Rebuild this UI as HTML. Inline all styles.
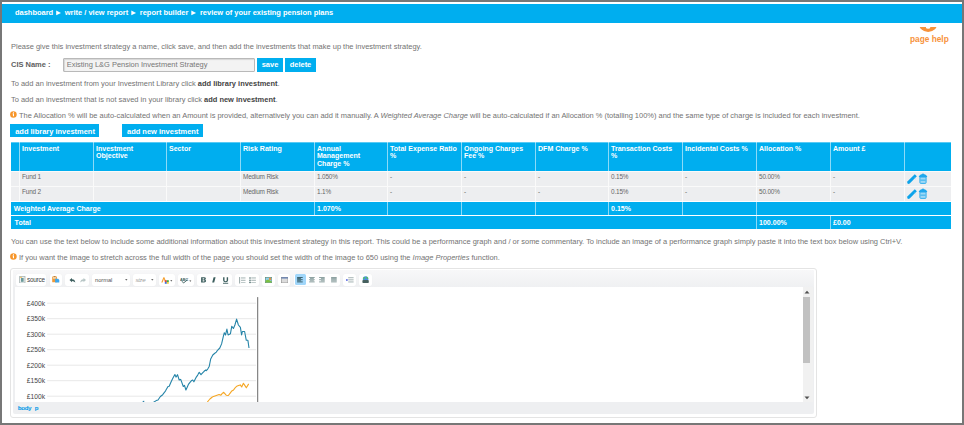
<!DOCTYPE html>
<html><head><meta charset="utf-8"><style>
html,body{margin:0;padding:0}
body{width:964px;height:425px;position:relative;overflow:hidden;background:#fff;font-family:"Liberation Sans",sans-serif;color:#737373}
.a{position:absolute;white-space:nowrap;line-height:1}
.frame{position:absolute;left:0;top:0;width:960px;height:421px;border:2px solid #777;border-top-width:2px}
.hdr{position:absolute;left:2px;top:4px;width:960px;height:18.6px;background:#00AEEF}
.btn{position:absolute;background:#00AEEF;color:#fff;font-weight:bold;line-height:1;white-space:nowrap}
.b{color:#444;font-weight:bold}
</style></head><body>
<div class="frame"></div>
<div class="hdr"></div>
<div class="a" style="left:15px;top:9.37px;font-size:7.48px;font-weight:bold;color:#fff">dashboard <span style="display:inline-block;width:7.40625px"></span> write / view report <span style="display:inline-block;width:7.40625px"></span> report builder <span style="display:inline-block;width:7.40625px"></span> review of your existing pension plans</div>
<svg style="position:absolute;left:0;top:0" width="300" height="24"><polygon points="56.2,10.5 61.0,12.9 56.2,15.3" fill="#fff"/><polygon points="131.3,10.5 136.10000000000002,12.9 131.3,15.3" fill="#fff"/><polygon points="191.3,10.5 196.10000000000002,12.9 191.3,15.3" fill="#fff"/></svg>
<svg style="position:absolute;left:912px;top:26.9px" width="32" height="6"><clipPath id="hc"><rect x="0" y="0" width="32" height="6"/></clipPath><g clip-path="url(#hc)"><circle cx="16.1" cy="-4.35" r="9.45" fill="#F7923A"/><path d="M14 -1 H18.2 V0.6 Q18.2 1.8 16.1 1.8 Q14 1.8 14 0.6 Z" fill="#fff"/></g></svg>
<div class="a" style="left:910px;top:35.17px;font-size:8.3px;font-weight:bold;color:#F7923A">page help</div>
<div class="a" style="left:11px;top:43.27px;font-size:7.48px">Please give this investment strategy a name, click save, and then add the investments that make up the investment strategy.</div>
<div class="a b" style="left:11px;top:61.17px;font-size:7.48px;color:#606060">CIS Name :</div>
<div style="position:absolute;left:63px;top:58px;width:189.8px;height:11.6px;border:1px solid #b9b9b9;border-radius:1px;background:#f3f3f3;box-shadow:inset 1px 1px 1px rgba(0,0,0,.12)"></div>
<div class="a" style="left:66.7px;top:60.97px;font-size:7.48px;color:#777">Existing L&amp;G Pension Investment Strategy</div>
<div class="btn" style="left:257px;top:58px;width:26px;height:13.7px;font-size:7.48px"><span style="position:absolute;left:4.7px;top:3.27px">save</span></div>
<div class="btn" style="left:285px;top:58px;width:31px;height:13.6px;font-size:7.48px"><span style="position:absolute;left:4.7px;top:3.27px">delete</span></div>
<div class="a" style="left:11px;top:80.37px;font-size:7.48px">To add an investment from your Investment Library click <span class="b">add library investment</span>.</div>
<div class="a" style="left:11px;top:96.17px;font-size:7.48px">To add an investment that is not saved in your library click <span class="b">add new investment</span>.</div>
<svg style="position:absolute;left:9px;top:110.1px" width="9" height="9"><circle cx="4.4" cy="4.5" r="3.3" fill="#F7962A"/><rect x="4" y="2.3" width="1" height="1" fill="#fff"/><path d="M3.5 3.6 H5 V6.3 H3.9 V4.3 H3.5 Z" fill="#fff"/></svg>
<div class="a" style="left:19px;top:111.57px;font-size:7.48px">The Allocation % will be auto-calculated when an Amount is provided, alternatively you can add it manually. A <i>Weighted Average Charge</i> will be auto-calculated if an Allocation % (totalling 100%) and the same type of charge is included for each investment.</div>
<div class="btn" style="left:10.2px;top:124.2px;width:89.1px;height:12.8px;font-size:7.48px"><span style="position:absolute;left:5px;top:3.87px">add library investment</span></div>
<div class="btn" style="left:122px;top:124.2px;width:80.9px;height:12.8px;font-size:7.48px"><span style="position:absolute;left:5px;top:3.87px">add new investment</span></div>
<div style="position:absolute;left:11px;top:142px;width:940px;height:29px;background:#00AEEF"></div>
<div style="position:absolute;left:11px;top:142px;width:940px;height:1px;background:rgba(255,255,255,0.35)"></div>
<div style="position:absolute;left:19px;top:142px;width:1px;height:29px;background:rgba(255,255,255,0.55)"></div>
<div style="position:absolute;left:93px;top:142px;width:1px;height:29px;background:rgba(255,255,255,0.55)"></div>
<div style="position:absolute;left:166px;top:142px;width:1px;height:29px;background:rgba(255,255,255,0.55)"></div>
<div style="position:absolute;left:240px;top:142px;width:1px;height:29px;background:rgba(255,255,255,0.55)"></div>
<div style="position:absolute;left:314px;top:142px;width:1px;height:29px;background:rgba(255,255,255,0.55)"></div>
<div style="position:absolute;left:387px;top:142px;width:1px;height:29px;background:rgba(255,255,255,0.55)"></div>
<div style="position:absolute;left:461px;top:142px;width:1px;height:29px;background:rgba(255,255,255,0.55)"></div>
<div style="position:absolute;left:535px;top:142px;width:1px;height:29px;background:rgba(255,255,255,0.55)"></div>
<div style="position:absolute;left:608px;top:142px;width:1px;height:29px;background:rgba(255,255,255,0.55)"></div>
<div style="position:absolute;left:682px;top:142px;width:1px;height:29px;background:rgba(255,255,255,0.55)"></div>
<div style="position:absolute;left:756px;top:142px;width:1px;height:29px;background:rgba(255,255,255,0.55)"></div>
<div style="position:absolute;left:830px;top:142px;width:1px;height:29px;background:rgba(255,255,255,0.55)"></div>
<div style="position:absolute;left:904px;top:142px;width:1px;height:29px;background:rgba(255,255,255,0.55)"></div>
<div style="position:absolute;left:22px;top:144.76px;font-size:7.05px;line-height:7.6px;font-weight:bold;color:#fff;white-space:nowrap">Investment</div>
<div style="position:absolute;left:96px;top:144.76px;font-size:7.05px;line-height:7.6px;font-weight:bold;color:#fff;white-space:nowrap">Investment<br>Objective</div>
<div style="position:absolute;left:169px;top:144.76px;font-size:7.05px;line-height:7.6px;font-weight:bold;color:#fff;white-space:nowrap">Sector</div>
<div style="position:absolute;left:243px;top:144.76px;font-size:7.05px;line-height:7.6px;font-weight:bold;color:#fff;white-space:nowrap">Risk Rating</div>
<div style="position:absolute;left:317px;top:144.76px;font-size:7.05px;line-height:7.6px;font-weight:bold;color:#fff;white-space:nowrap">Annual<br>Management<br>Charge %</div>
<div style="position:absolute;left:390px;top:144.76px;font-size:7.05px;line-height:7.6px;font-weight:bold;color:#fff;white-space:nowrap">Total Expense Ratio<br>%</div>
<div style="position:absolute;left:464px;top:144.76px;font-size:7.05px;line-height:7.6px;font-weight:bold;color:#fff;white-space:nowrap">Ongoing Charges<br>Fee %</div>
<div style="position:absolute;left:538px;top:144.76px;font-size:7.05px;line-height:7.6px;font-weight:bold;color:#fff;white-space:nowrap">DFM Charge %</div>
<div style="position:absolute;left:611px;top:144.76px;font-size:7.05px;line-height:7.6px;font-weight:bold;color:#fff;white-space:nowrap">Transaction Costs<br>%</div>
<div style="position:absolute;left:685px;top:144.76px;font-size:7.05px;line-height:7.6px;font-weight:bold;color:#fff;white-space:nowrap">Incidental Costs %</div>
<div style="position:absolute;left:759px;top:144.76px;font-size:7.05px;line-height:7.6px;font-weight:bold;color:#fff;white-space:nowrap">Allocation %</div>
<div style="position:absolute;left:833px;top:144.76px;font-size:7.05px;line-height:7.6px;font-weight:bold;color:#fff;white-space:nowrap">Amount &pound;</div>
<div style="position:absolute;left:11px;top:171px;width:940px;height:15px;background:#EDEEF0"></div>
<div style="position:absolute;left:11px;top:171px;width:940px;height:1px;background:#fafafa"></div>
<div style="position:absolute;left:19px;top:171px;width:1px;height:15px;background:#fafafa"></div>
<div style="position:absolute;left:93px;top:171px;width:1px;height:15px;background:#fafafa"></div>
<div style="position:absolute;left:166px;top:171px;width:1px;height:15px;background:#fafafa"></div>
<div style="position:absolute;left:240px;top:171px;width:1px;height:15px;background:#fafafa"></div>
<div style="position:absolute;left:314px;top:171px;width:1px;height:15px;background:#fafafa"></div>
<div style="position:absolute;left:387px;top:171px;width:1px;height:15px;background:#fafafa"></div>
<div style="position:absolute;left:461px;top:171px;width:1px;height:15px;background:#fafafa"></div>
<div style="position:absolute;left:535px;top:171px;width:1px;height:15px;background:#fafafa"></div>
<div style="position:absolute;left:608px;top:171px;width:1px;height:15px;background:#fafafa"></div>
<div style="position:absolute;left:682px;top:171px;width:1px;height:15px;background:#fafafa"></div>
<div style="position:absolute;left:756px;top:171px;width:1px;height:15px;background:#fafafa"></div>
<div style="position:absolute;left:830px;top:171px;width:1px;height:15px;background:#fafafa"></div>
<div style="position:absolute;left:904px;top:171px;width:1px;height:15px;background:#fafafa"></div>
<div class="a" style="left:22px;top:173.78px;font-size:6.4px;letter-spacing:-0.16px;color:#666">Fund 1</div>
<div class="a" style="left:243px;top:173.78px;font-size:6.4px;letter-spacing:-0.16px;color:#666">Medium Risk</div>
<div class="a" style="left:317px;top:173.78px;font-size:6.4px;letter-spacing:-0.16px;color:#666">1.050%</div>
<div class="a" style="left:390px;top:173.78px;font-size:6.4px;letter-spacing:-0.16px;color:#666">-</div>
<div class="a" style="left:464px;top:173.78px;font-size:6.4px;letter-spacing:-0.16px;color:#666">-</div>
<div class="a" style="left:538px;top:173.78px;font-size:6.4px;letter-spacing:-0.16px;color:#666">-</div>
<div class="a" style="left:611px;top:173.78px;font-size:6.4px;letter-spacing:-0.16px;color:#666">0.15%</div>
<div class="a" style="left:685px;top:173.78px;font-size:6.4px;letter-spacing:-0.16px;color:#666">-</div>
<div class="a" style="left:759px;top:173.78px;font-size:6.4px;letter-spacing:-0.16px;color:#666">50.00%</div>
<div class="a" style="left:833px;top:173.78px;font-size:6.4px;letter-spacing:-0.16px;color:#666">-</div>
<svg style="position:absolute;left:904px;top:172px" width="28" height="14" viewBox="0 0 28 14"><path d="M3.6 9.3 L10.75 2.23 L12.85 4.37 L5.7 11.4 Q4.5 12.3 3.5 11.5 Q2.8 10.4 3.6 9.3 Z" fill="#0DA3EA"/><path d="M9.9 5.3 L11.5 6.9" stroke="#6cc8f2" stroke-width="0.45"/><path d="M15.3 4.3 Q15.6 2.3 19 2.1 Q22.4 2.3 22.7 4.3 Z" fill="#1FA8EC"/><rect x="18.2" y="1.6" width="1.6" height="1" fill="#1FA8EC"/><rect x="14.9" y="4" width="8.2" height="1.1" fill="#1FA8EC"/><path d="M15.9 5.1 H22.1 V10.6 Q22.1 11.4 21.3 11.4 H16.7 Q15.9 11.4 15.9 10.6 Z" fill="#9fd9f6" stroke="#25a9ec" stroke-width="0.9"/><rect x="16.4" y="7.6" width="5.2" height="1.1" fill="#3db3ee"/></svg>
<div style="position:absolute;left:11px;top:186px;width:940px;height:15px;background:#EDEEF0"></div>
<div style="position:absolute;left:11px;top:186px;width:940px;height:1px;background:#fafafa"></div>
<div style="position:absolute;left:19px;top:186px;width:1px;height:15px;background:#fafafa"></div>
<div style="position:absolute;left:93px;top:186px;width:1px;height:15px;background:#fafafa"></div>
<div style="position:absolute;left:166px;top:186px;width:1px;height:15px;background:#fafafa"></div>
<div style="position:absolute;left:240px;top:186px;width:1px;height:15px;background:#fafafa"></div>
<div style="position:absolute;left:314px;top:186px;width:1px;height:15px;background:#fafafa"></div>
<div style="position:absolute;left:387px;top:186px;width:1px;height:15px;background:#fafafa"></div>
<div style="position:absolute;left:461px;top:186px;width:1px;height:15px;background:#fafafa"></div>
<div style="position:absolute;left:535px;top:186px;width:1px;height:15px;background:#fafafa"></div>
<div style="position:absolute;left:608px;top:186px;width:1px;height:15px;background:#fafafa"></div>
<div style="position:absolute;left:682px;top:186px;width:1px;height:15px;background:#fafafa"></div>
<div style="position:absolute;left:756px;top:186px;width:1px;height:15px;background:#fafafa"></div>
<div style="position:absolute;left:830px;top:186px;width:1px;height:15px;background:#fafafa"></div>
<div style="position:absolute;left:904px;top:186px;width:1px;height:15px;background:#fafafa"></div>
<div class="a" style="left:22px;top:188.78px;font-size:6.4px;letter-spacing:-0.16px;color:#666">Fund 2</div>
<div class="a" style="left:243px;top:188.78px;font-size:6.4px;letter-spacing:-0.16px;color:#666">Medium Risk</div>
<div class="a" style="left:317px;top:188.78px;font-size:6.4px;letter-spacing:-0.16px;color:#666">1.1%</div>
<div class="a" style="left:390px;top:188.78px;font-size:6.4px;letter-spacing:-0.16px;color:#666">-</div>
<div class="a" style="left:464px;top:188.78px;font-size:6.4px;letter-spacing:-0.16px;color:#666">-</div>
<div class="a" style="left:538px;top:188.78px;font-size:6.4px;letter-spacing:-0.16px;color:#666">-</div>
<div class="a" style="left:611px;top:188.78px;font-size:6.4px;letter-spacing:-0.16px;color:#666">0.15%</div>
<div class="a" style="left:685px;top:188.78px;font-size:6.4px;letter-spacing:-0.16px;color:#666">-</div>
<div class="a" style="left:759px;top:188.78px;font-size:6.4px;letter-spacing:-0.16px;color:#666">50.00%</div>
<div class="a" style="left:833px;top:188.78px;font-size:6.4px;letter-spacing:-0.16px;color:#666">-</div>
<svg style="position:absolute;left:904px;top:187px" width="28" height="14" viewBox="0 0 28 14"><path d="M3.6 9.3 L10.75 2.23 L12.85 4.37 L5.7 11.4 Q4.5 12.3 3.5 11.5 Q2.8 10.4 3.6 9.3 Z" fill="#0DA3EA"/><path d="M9.9 5.3 L11.5 6.9" stroke="#6cc8f2" stroke-width="0.45"/><path d="M15.3 4.3 Q15.6 2.3 19 2.1 Q22.4 2.3 22.7 4.3 Z" fill="#1FA8EC"/><rect x="18.2" y="1.6" width="1.6" height="1" fill="#1FA8EC"/><rect x="14.9" y="4" width="8.2" height="1.1" fill="#1FA8EC"/><path d="M15.9 5.1 H22.1 V10.6 Q22.1 11.4 21.3 11.4 H16.7 Q15.9 11.4 15.9 10.6 Z" fill="#9fd9f6" stroke="#25a9ec" stroke-width="0.9"/><rect x="16.4" y="7.6" width="5.2" height="1.1" fill="#3db3ee"/></svg>
<div style="position:absolute;left:11px;top:202px;width:940px;height:13px;background:#00AEEF"></div>
<div style="position:absolute;left:314px;top:202px;width:1px;height:13px;background:rgba(255,255,255,0.55)"></div>
<div style="position:absolute;left:387px;top:202px;width:1px;height:13px;background:rgba(255,255,255,0.55)"></div>
<div style="position:absolute;left:461px;top:202px;width:1px;height:13px;background:rgba(255,255,255,0.55)"></div>
<div style="position:absolute;left:535px;top:202px;width:1px;height:13px;background:rgba(255,255,255,0.55)"></div>
<div style="position:absolute;left:608px;top:202px;width:1px;height:13px;background:rgba(255,255,255,0.55)"></div>
<div style="position:absolute;left:682px;top:202px;width:1px;height:13px;background:rgba(255,255,255,0.55)"></div>
<div style="position:absolute;left:756px;top:202px;width:1px;height:13px;background:rgba(255,255,255,0.55)"></div>
<div class="a" style="left:13.7px;top:205.43px;font-size:7.05px;font-weight:bold;color:#fff">Weighted Average Charge</div>
<div class="a" style="left:317px;top:205.43px;font-size:7.05px;font-weight:bold;color:#fff">1.070%</div>
<div class="a" style="left:611px;top:205.43px;font-size:7.05px;font-weight:bold;color:#fff">0.15%</div>
<div style="position:absolute;left:11px;top:216px;width:940px;height:12.6px;background:#00AEEF"></div>
<div style="position:absolute;left:756px;top:216px;width:1px;height:12.6px;background:rgba(255,255,255,0.55)"></div>
<div style="position:absolute;left:830px;top:216px;width:1px;height:12.6px;background:rgba(255,255,255,0.55)"></div>
<div class="a" style="left:14.6px;top:218.63px;font-size:7.05px;font-weight:bold;color:#fff">Total</div>
<div class="a" style="left:759px;top:218.63px;font-size:7.05px;font-weight:bold;color:#fff">100.00%</div>
<div class="a" style="left:833px;top:218.63px;font-size:7.05px;font-weight:bold;color:#fff">&pound;0.00</div>
<div class="a" style="left:11px;top:237.87px;font-size:7.48px">You can use the text below to include some additional information about this investment strategy in this report. This could be a performance graph and / or some commentary. To include an image of a performance graph simply paste it into the text box below using Ctrl+V.</div>
<svg style="position:absolute;left:9px;top:252.0px" width="9" height="9"><circle cx="4.4" cy="4.5" r="3.3" fill="#F7962A"/><rect x="4" y="2.3" width="1" height="1" fill="#fff"/><path d="M3.5 3.6 H5 V6.3 H3.9 V4.3 H3.5 Z" fill="#fff"/></svg>
<div class="a" style="left:19px;top:253.57px;font-size:7.48px">If you want the image to stretch across the full width of the page you should set the width of the image to 650 using the <i>Image Properties</i> function.</div>
<div style="position:absolute;left:10px;top:268px;width:805px;height:148.3px;border:1px solid #e4e4e4;border-radius:3px;background:#fff"></div>
<div style="position:absolute;left:13px;top:270.3px;width:800.5px;height:143.7px;border-radius:2px;background:#eeeff1"></div>
<div style="position:absolute;left:13px;top:270.3px;width:800.5px;height:17px;border-radius:2px 2px 0 0;background:linear-gradient(#f8f8f9,#eff0f2)"></div>
<div style="position:absolute;left:15.5px;top:274.1px;width:30.7px;height:11.5px;background:#fff;border-radius:2px;box-shadow:0 0 1px rgba(0,0,0,0.06)"></div>
<div style="position:absolute;left:50.1px;top:274.1px;width:12.3px;height:11.5px;background:#fff;border-radius:2px;box-shadow:0 0 1px rgba(0,0,0,0.06)"></div>
<div style="position:absolute;left:65.2px;top:274.1px;width:24.0px;height:11.5px;background:#fff;border-radius:2px;box-shadow:0 0 1px rgba(0,0,0,0.06)"></div>
<div style="position:absolute;left:92.1px;top:274.1px;width:37.8px;height:11.5px;background:#fff;border-radius:2px;box-shadow:0 0 1px rgba(0,0,0,0.06)"></div>
<div style="position:absolute;left:132.8px;top:274.1px;width:23.2px;height:11.5px;background:#fff;border-radius:2px;box-shadow:0 0 1px rgba(0,0,0,0.06)"></div>
<div style="position:absolute;left:159px;top:274.1px;width:15.7px;height:11.5px;background:#fff;border-radius:2px;box-shadow:0 0 1px rgba(0,0,0,0.06)"></div>
<div style="position:absolute;left:177.9px;top:274.1px;width:15.8px;height:11.5px;background:#fff;border-radius:2px;box-shadow:0 0 1px rgba(0,0,0,0.06)"></div>
<div style="position:absolute;left:197px;top:274.1px;width:34.8px;height:11.5px;background:#fff;border-radius:2px;box-shadow:0 0 1px rgba(0,0,0,0.06)"></div>
<div style="position:absolute;left:235.4px;top:274.1px;width:23.2px;height:11.5px;background:#fff;border-radius:2px;box-shadow:0 0 1px rgba(0,0,0,0.06)"></div>
<div style="position:absolute;left:262px;top:274.1px;width:12.8px;height:11.5px;background:#fff;border-radius:2px;box-shadow:0 0 1px rgba(0,0,0,0.06)"></div>
<div style="position:absolute;left:277.7px;top:274.1px;width:12.5px;height:11.5px;background:#fff;border-radius:2px;box-shadow:0 0 1px rgba(0,0,0,0.06)"></div>
<div style="position:absolute;left:293.7px;top:274.1px;width:46.1px;height:11.5px;background:#fff;border-radius:2px;box-shadow:0 0 1px rgba(0,0,0,0.06)"></div>
<div style="position:absolute;left:343.4px;top:274.1px;width:12.2px;height:11.5px;background:#fff;border-radius:2px;box-shadow:0 0 1px rgba(0,0,0,0.06)"></div>
<div style="position:absolute;left:359.3px;top:274.1px;width:12.4px;height:11.5px;background:#fff;border-radius:2px;box-shadow:0 0 1px rgba(0,0,0,0.06)"></div>
<svg style="position:absolute;left:18.5px;top:275.8px" width="7" height="7.5"><rect x="0.6" y="0.5" width="5.4" height="6.6" fill="#e9eeee" stroke="#a9b5b5" stroke-width="0.8"/><rect x="2" y="2" width="2.6" height="3.8" fill="#6b9a9a"/><rect x="1" y="0.8" width="2" height="1" fill="#f0c060"/></svg>
<div class="a" style="left:27px;top:277.08px;font-size:6.4px;letter-spacing:-0.25px;color:#444">source</div>
<svg style="position:absolute;left:52px;top:276.2px" width="8" height="7"><rect x="0.2" y="0.6" width="4.8" height="5.6" rx="0.5" fill="#EE9A3A"/><rect x="1" y="0.9" width="3.2" height="1.9" fill="#F6D7A8"/><rect x="1.6" y="0.1" width="2" height="1" fill="#b97a3a"/><path d="M3.1 2.8 H6.2 L7.3 3.9 V6.5 H3.1 Z" fill="#3EA6EA"/></svg>
<svg style="position:absolute;left:68.5px;top:277.5px" width="18" height="5"><path d="M0.5 2 L3 0 L3 1.2 Q6 1.2 6.3 4.6 Q5 3 3 3 L3 4.2 Z" fill="#3c5e5e"/><path d="M17 2 L14.5 0 L14.5 1.2 Q11.5 1.2 11.2 4.6 Q12.5 3 14.5 3 L14.5 4.2 Z" fill="#b8c6c6"/></svg>
<div class="a" style="left:95px;top:277.97px;font-size:5.7px;color:#555">normal</div>
<svg style="position:absolute;left:124.8px;top:278.7px" width="4" height="3"><path d="M0.1 0.3 L2.5 0.3 L1.3 1.6Z" fill="#333"/></svg>
<div class="a" style="left:135.5px;top:277.25px;font-size:6.2px;letter-spacing:-0.3px;color:#a0a0a0;font-style:italic">size</div>
<svg style="position:absolute;left:150.8px;top:278.7px" width="4" height="3"><path d="M0.1 0.3 L2.5 0.3 L1.3 1.6Z" fill="#333"/></svg>
<svg style="position:absolute;left:161px;top:276.8px" width="12" height="7"><path d="M0.3 5.5 L2.4 0.3 L3.4 0.3 L5.4 5.5 L4.2 5.5 L2.9 2 L1.6 5.5Z" fill="#F5A030"/><rect x="3.8" y="3.2" width="2" height="1.8" fill="#e04040"/><rect x="5.8" y="3.2" width="2" height="1.8" fill="#40b040"/><rect x="3.8" y="5" width="2" height="1.8" fill="#4070e0"/><rect x="5.8" y="5" width="2" height="1.8" fill="#f0d040"/><path d="M9.3 3.3 L11.3 3.3 L10.3 4.5Z" fill="#333"/></svg>
<svg style="position:absolute;left:179.5px;top:276.5px" width="12" height="7"><text x="0" y="3.6" font-size="3.8" font-weight="bold" fill="#3c5e5e" font-family="Liberation Sans">ABC</text><path d="M2 4.2 L3.5 6 L7.5 2.8" fill="none" stroke="#3c5e5e" stroke-width="0.9"/><path d="M9.3 3.6 L11.3 3.6 L10.3 4.8Z" fill="#333"/></svg>
<svg style="position:absolute;left:200px;top:277px" width="30" height="7"><path d="M1.1 0.3 H4.1 Q5.9 0.3 5.9 1.6 Q5.9 2.4 5.1 2.7 Q6.1 3 6.1 4 Q6.1 5.4 4.2 5.4 H1.1 Z M2.6 1.3 V2.4 H3.8 Q4.4 2.4 4.4 1.85 Q4.4 1.3 3.8 1.3 Z M2.6 3.3 V4.4 H3.9 Q4.6 4.4 4.6 3.85 Q4.6 3.3 3.9 3.3 Z" fill="#3c5e5e" fill-rule="evenodd"/><path d="M13.6 0.3 H15.6 L14.2 5.4 H12.2 Z" fill="#3c5e5e"/><path d="M23.1 0.3 H24.5 V3.2 Q24.5 4.2 25.6 4.2 Q26.7 4.2 26.7 3.2 V0.3 H28.1 V3.3 Q28.1 5.2 25.6 5.2 Q23.1 5.2 23.1 3.3 Z" fill="#3c5e5e"/><rect x="23" y="5.8" width="5.2" height="0.9" fill="#3c5e5e"/></svg>
<svg style="position:absolute;left:238.5px;top:276.8px" width="18" height="7"><rect x="0.3" y="0" width="0.8" height="6.5" fill="#7a8e8e"/><rect x="2" y="0.5" width="4.5" height="0.9" fill="#9aaaaa"/><rect x="2" y="2.8" width="4.5" height="0.9" fill="#9aaaaa"/><rect x="2" y="5" width="4.5" height="0.9" fill="#b8c4c4"/><circle cx="11" cy="1" r="0.8" fill="#4a6a6a"/><circle cx="11" cy="3.2" r="0.8" fill="#4a6a6a"/><circle cx="11" cy="5.4" r="0.8" fill="#4a6a6a"/><rect x="12.3" y="0.5" width="4.6" height="0.9" fill="#9aaaaa"/><rect x="12.3" y="2.8" width="4.6" height="0.9" fill="#9aaaaa"/><rect x="12.3" y="5" width="4.6" height="0.9" fill="#b8c4c4"/></svg>
<svg style="position:absolute;left:264.8px;top:276.9px" width="7.5" height="6.3"><rect x="0" y="0" width="7.2" height="6" fill="#6a8a6a"/><rect x="0.6" y="0.6" width="6" height="4.8" fill="#8fd0f0"/><circle cx="5" cy="1.9" r="1.1" fill="#f08a30"/><path d="M0.6 5.4 L0.6 3.4 L3 2.6 L6.6 4.2 L6.6 5.4Z" fill="#7cc040"/></svg>
<svg style="position:absolute;left:280.8px;top:276.9px" width="7.5" height="6.3"><rect x="0.3" y="0.3" width="6.6" height="5.6" fill="#dcdcdc" stroke="#8a8a8a" stroke-width="0.6"/><rect x="0.3" y="0.3" width="6.6" height="1.2" fill="#5a78b0"/></svg>
<div style="position:absolute;left:295px;top:274.1px;width:10.8px;height:10.8px;background:#a0d6fa;border-radius:1.5px"></div>
<svg style="position:absolute;left:297.3px;top:277px" width="6" height="6"><rect x="0.10" y="0.00" width="5.60" height="1.0" fill="#3d6470"/><rect x="0.10" y="1.10" width="3.80" height="1.0" fill="#3d6470"/><rect x="0.10" y="2.20" width="5.60" height="1.0" fill="#3d6470"/><rect x="0.10" y="3.30" width="3.80" height="1.0" fill="#3d6470"/><rect x="0.10" y="4.40" width="5.60" height="1.0" fill="#3d6470"/></svg>
<svg style="position:absolute;left:308.6px;top:277px" width="6" height="6"><rect x="0.10" y="0.00" width="5.60" height="1.0" fill="#8fa3a3"/><rect x="1.00" y="1.10" width="3.80" height="1.0" fill="#8fa3a3"/><rect x="0.10" y="2.20" width="5.60" height="1.0" fill="#8fa3a3"/><rect x="1.00" y="3.30" width="3.80" height="1.0" fill="#8fa3a3"/><rect x="0.10" y="4.40" width="5.60" height="1.0" fill="#8fa3a3"/></svg>
<svg style="position:absolute;left:319.4px;top:277px" width="6" height="6"><rect x="0.10" y="0.00" width="5.60" height="1.0" fill="#8fa3a3"/><rect x="1.90" y="1.10" width="3.80" height="1.0" fill="#8fa3a3"/><rect x="0.10" y="2.20" width="5.60" height="1.0" fill="#8fa3a3"/><rect x="1.90" y="3.30" width="3.80" height="1.0" fill="#8fa3a3"/><rect x="0.10" y="4.40" width="5.60" height="1.0" fill="#8fa3a3"/></svg>
<svg style="position:absolute;left:330.6px;top:277px" width="6" height="6"><rect x="0.10" y="0.00" width="5.60" height="1.0" fill="#8fa3a3"/><rect x="0.10" y="1.10" width="5.60" height="1.0" fill="#8fa3a3"/><rect x="0.10" y="2.20" width="5.60" height="1.0" fill="#8fa3a3"/><rect x="0.10" y="3.30" width="5.60" height="1.0" fill="#8fa3a3"/><rect x="0.10" y="4.40" width="5.60" height="1.0" fill="#8fa3a3"/></svg>
<svg style="position:absolute;left:345.8px;top:276.8px" width="8" height="7"><rect x="2.2" y="0.3" width="5.4" height="0.9" fill="#9aaaaa"/><rect x="2.2" y="2.4" width="5.4" height="0.9" fill="#9aaaaa"/><rect x="2.2" y="4.5" width="5.4" height="0.9" fill="#9aaaaa"/><circle cx="0.9" cy="3" r="0.9" fill="#5060e0"/></svg>
<svg style="position:absolute;left:361.5px;top:276.3px" width="7.5" height="7.5"><circle cx="3.6" cy="3" r="2.8" fill="#4f8fe0"/><path d="M1 2.2 Q1.8 0.6 3 1.1 Q3.2 2.6 1.6 3.4Z" fill="#52c85a"/><path d="M4.3 0.5 Q6.2 1 6.3 2.8 Q5 3.2 4.4 2Z" fill="#52c85a"/><path d="M0.4 4.6 Q0.6 3.9 1.6 3.9 H5.6 Q6.6 3.9 6.8 4.6 V6.2 Q6.8 6.9 6 6.9 H1.2 Q0.4 6.9 0.4 6.2Z" fill="#46605e"/></svg>
<div style="position:absolute;left:14.9px;top:287.3px;width:787.9px;height:115px;background:#fff;overflow:hidden"><svg width="788" height="115" style="position:absolute;left:0;top:0"><rect x="32.1" y="15.7" width="209" height="1" fill="#e8e8e8"/><rect x="32.1" y="31.2" width="209" height="1" fill="#e8e8e8"/><rect x="32.1" y="46.7" width="209" height="1" fill="#e8e8e8"/><rect x="32.1" y="62.2" width="209" height="1" fill="#e8e8e8"/><rect x="32.1" y="77.7" width="209" height="1" fill="#e8e8e8"/><rect x="32.1" y="93.2" width="209" height="1" fill="#e8e8e8"/><rect x="32.1" y="108.7" width="209" height="1" fill="#e8e8e8"/><text x="30.1" y="18.8" text-anchor="end" font-size="6.7" fill="#444" font-family="Liberation Sans">£400k</text><text x="30.1" y="34.3" text-anchor="end" font-size="6.7" fill="#444" font-family="Liberation Sans">£350k</text><text x="30.1" y="49.8" text-anchor="end" font-size="6.7" fill="#444" font-family="Liberation Sans">£300k</text><text x="30.1" y="65.3" text-anchor="end" font-size="6.7" fill="#444" font-family="Liberation Sans">£250k</text><text x="30.1" y="80.8" text-anchor="end" font-size="6.7" fill="#444" font-family="Liberation Sans">£200k</text><text x="30.1" y="96.3" text-anchor="end" font-size="6.7" fill="#444" font-family="Liberation Sans">£150k</text><text x="30.1" y="111.8" text-anchor="end" font-size="6.7" fill="#444" font-family="Liberation Sans">£100k</text><rect x="242.2" y="10.1" width="1" height="110" fill="#6a6a6a"/><path d="M138.6 115.3 L139.5 114.7 L141.2 113.6 L143.0 113.0 L145.4 109.5 L147.7 107.7 L149.2 105.7 L150.7 103.6 L153.0 99.5 L154.2 99.2 L155.7 95.7 L157.2 92.4 L158.5 90.1 L159.9 87.5 L161.0 90.1 L162.5 87.7 L164.2 93.0 L165.7 92.4 L168.3 99.5 L169.5 98.3 L170.9 103.0 L172.2 100.2 L173.6 97.1 L175.0 95.3 L176.3 93.8 L177.7 93.0 L178.9 94.8 L181.3 90.1 L182.7 88.1 L184.2 85.3 L186.0 87.7 L187.6 85.9 L189.1 84.3 L190.7 83.0 L191.3 83.6 L192.7 82.1 L194.2 79.5 L195.7 71.9 L197.8 68.0 L199.5 66.5 L201.3 65.1 L202.5 63.3 L204.8 61.0 L206.6 56.9 L208.4 49.2 L209.3 45.7 L210.5 48.0 L211.9 42.1 L213.1 48.0 L215.4 46.8 L216.8 39.2 L218.4 41.5 L219.9 38.0 L221.6 32.1 L223.4 38.0 L225.4 40.4 L226.6 48.0 L227.4 44.5 L229.6 44.5 L231.3 53.3 L232.9 53.3 L234.0 61.0" fill="none" stroke="#2584A8" stroke-width="1.1" stroke-linejoin="round"/><path d="M127.7 114.6 L129.3 114.3" fill="none" stroke="#2A82A8" stroke-width="1.1"/><path d="M190.6 116.2 L192.3 115.3 L192.8 114.5 L194.9 112.0 L197.0 110.3 L198.5 109.4 L199.9 108.9 L202.0 108.2 L204.1 107.5 L205.9 108.2 L207.3 106.4 L208.7 105.3 L211.2 108.2 L213.3 108.5 L215.0 106.3 L216.8 103.9 L218.6 102.9 L220.2 100.7 L221.7 99.3 L223.5 98.6 L225.3 97.9 L226.7 100.0 L228.4 96.2 L229.8 98.4 L231.3 100.8 L233.7 96.9" fill="none" stroke="#F5A623" stroke-width="1.1" stroke-linejoin="round"/></svg></div>
<div style="position:absolute;left:802.8px;top:287.3px;width:10px;height:115px;background:#f1f1f1"></div>
<div style="position:absolute;left:803.2px;top:296.8px;width:6.8px;height:66px;background:#c1c1c1"></div>
<svg style="position:absolute;left:803px;top:290px" width="8" height="4"><path d="M1.5 3.5 L4 0.8 L6.5 3.5Z" fill="#505050"/></svg>
<svg style="position:absolute;left:803px;top:395.5px" width="8" height="4"><path d="M1.5 0.5 L4 3.2 L6.5 0.5Z" fill="#505050"/></svg>
<div class="a" style="left:17.8px;top:405.45px;font-size:6.2px;color:#0a9be8;text-shadow:0.35px 0 0 #0a9be8">body</div>
<div class="a" style="left:34.7px;top:405.45px;font-size:6.2px;color:#0a9be8;text-shadow:0.35px 0 0 #0a9be8">p</div>
</body></html>
